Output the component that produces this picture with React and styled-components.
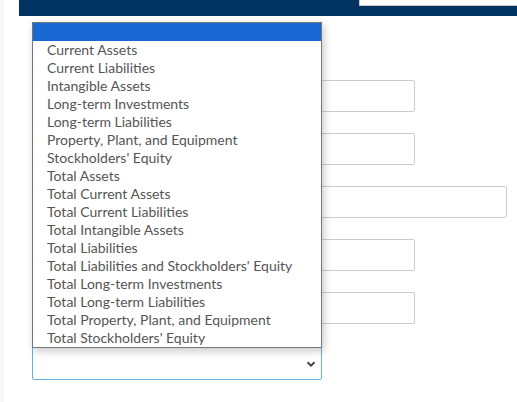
import React from "react";
import styled, { createGlobalStyle } from "styled-components";

const GlobalStyle = createGlobalStyle`
  html, body {
    margin: 0;
    padding: 0;
    background: #fff;
    font-family: Lato, "Open Sans", sans-serif;
  }
`;

const options = [
  "Current Assets",
  "Current Liabilities",
  "Intangible Assets",
  "Long-term Investments",
  "Long-term Liabilities",
  "Property, Plant, and Equipment",
  "Stockholders' Equity",
  "Total Assets",
  "Total Current Assets",
  "Total Current Liabilities",
  "Total Intangible Assets",
  "Total Liabilities",
  "Total Liabilities and Stockholders' Equity",
  "Total Long-term Investments",
  "Total Long-term Liabilities",
  "Total Property, Plant, and Equipment",
  "Total Stockholders' Equity",
];

const Page = styled.div`
  position: relative;
  width: 517px;
  height: 402px;
  overflow: hidden;
  border-left: 4px solid #f7f7f7;
  box-sizing: border-box;
`;

const Header = styled.div`
  margin-left: 15px;
  height: 16px;
  background: #00335f;
  display: flex;
  justify-content: flex-end;
`;

const SearchBox = styled.div`
  width: 157px;
  height: 5px;
  background: #fff;
  border-left: 1px solid #c8c8c8;
  border-bottom: 1px solid #c8c8c8;
`;

const Form = styled.div`
  display: flex;
  flex-direction: column;
  gap: 21px;
  padding: 64px 0 0 28px;
`;

const Input = styled.div`
  width: ${(p) => (p.$wide ? "475px" : "383px")};
  height: 32px;
  box-sizing: border-box;
  border: 1px solid #cccccc;
  border-radius: 2px;
  background: #fff;
`;

const Select = styled.div`
  width: 290px;
  height: 33px;
  margin-top: 2px;
  box-sizing: border-box;
  border: 1px solid #66afe9;
  border-radius: 2px;
  display: flex;
  align-items: center;
  justify-content: flex-end;
  padding-right: 4px;
  color: #333;
`;

const Menu = styled.ul`
  position: absolute;
  left: 28px;
  top: 22px;
  width: 290px;
  margin: 0;
  padding: 0;
  list-style: none;
  box-sizing: border-box;
  border: 1px solid #767676;
  background: #fff;
  box-shadow: 2px 3px 8px rgba(0, 0, 0, 0.22);
`;

const Option = styled.li`
  height: 18px;
  line-height: 18px;
  padding-left: 14px;
  font-size: 14px;
  color: #555;
  white-space: nowrap;
  background: ${(p) => (p.$active ? "#1a68d3" : "transparent")};
`;

const Chevron = () => (
  <svg width="12" height="12" viewBox="0 0 12 12">
    <path d="M2.5 4.2 L6 7.6 L9.5 4.2" fill="none" stroke="#444" strokeWidth="2" />
  </svg>
);

export default function App() {
  return (
    <>
      <GlobalStyle />
      <Page>
        <Header>
          <SearchBox />
        </Header>
        <Form>
          <Input />
          <Input />
          <Input $wide />
          <Input />
          <Input />
          <Select>
            <Chevron />
          </Select>
        </Form>
        <Menu>
          <Option $active />
          {options.map((o) => (
            <Option key={o}>{o}</Option>
          ))}
        </Menu>
      </Page>
    </>
  );
}
